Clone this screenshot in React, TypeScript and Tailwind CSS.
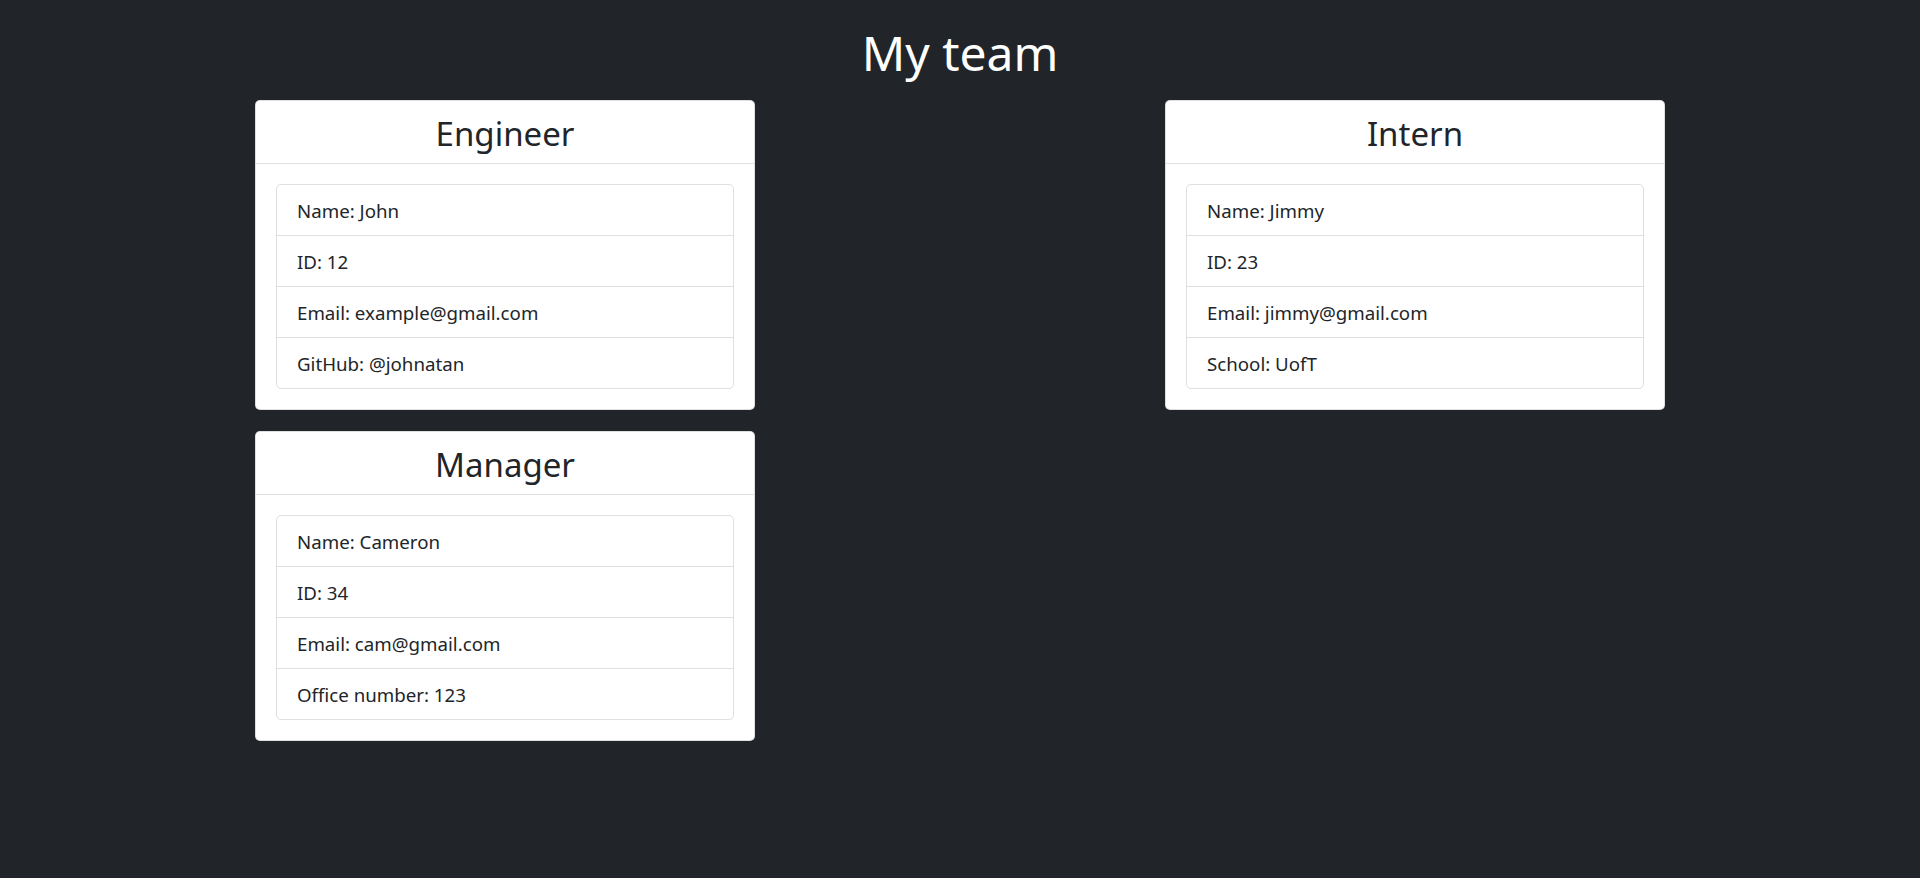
const font = { fontFamily: '"Noto Sans", "Open Sans", sans-serif' };

type Member = {
  role: string;
  rows: string[];
};

const engineer: Member = {
  role: "Engineer",
  rows: ["Name: John", "ID: 12", "Email: example@gmail.com", "GitHub: @johnatan"],
};

const manager: Member = {
  role: "Manager",
  rows: ["Name: Cameron", "ID: 34", "Email: cam@gmail.com", "Office number: 123"],
};

const intern: Member = {
  role: "Intern",
  rows: ["Name: Jimmy", "ID: 23", "Email: jimmy@gmail.com", "School: UofT"],
};

function MemberCard({ member }: { member: Member }) {
  return (
    <div className="w-[500px] rounded-[5px] border border-black/[0.125] bg-white text-[#212529]">
      <div className="border-b border-black/[0.125] pt-[3px] text-center">
        <h2 className="text-[33px] font-normal leading-[59px]">{member.role}</h2>
      </div>
      <div className="p-5">
        <ul className="rounded-[5px] border border-black/[0.125]">
          {member.rows.map((row, i) => (
            <li
              key={row}
              className={`px-5 pt-[13px] pb-[11px] text-[18.7px] leading-[26px] ${
                i > 0 ? "border-t border-black/[0.125]" : ""
              }`}
            >
              {row}
            </li>
          ))}
        </ul>
      </div>
    </div>
  );
}

export default function App() {
  return (
    <div className="min-h-[878px] bg-[#212529]" style={font}>
      <h1 className="pt-[23px] text-center text-[48px] font-normal leading-[60px] text-white">
        My team
      </h1>
      <div className="mt-[17px] flex justify-center gap-[410px]">
        <div className="flex flex-col gap-[21px]">
          <MemberCard member={engineer} />
          <MemberCard member={manager} />
        </div>
        <div>
          <MemberCard member={intern} />
        </div>
      </div>
    </div>
  );
}
